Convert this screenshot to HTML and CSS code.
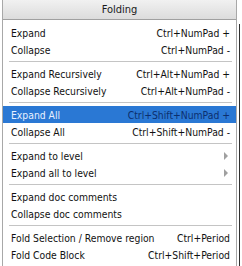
FILE: index.html
```html
<!DOCTYPE html>
<html>
<head>
<meta charset="utf-8">
<link rel="stylesheet" href="styles.css">
</head>
<body>
<div class="page">
  <div class="menu">
    <div class="title">Folding</div>
    <div class="items">
      <div class="item"><span class="label">Expand</span><span class="key">Ctrl+NumPad +</span></div>
      <div class="item"><span class="label">Collapse</span><span class="key">Ctrl+NumPad -</span></div>
      <div class="sep"></div>
      <div class="item"><span class="label">Expand Recursively</span><span class="key">Ctrl+Alt+NumPad +</span></div>
      <div class="item"><span class="label">Collapse Recursively</span><span class="key">Ctrl+Alt+NumPad -</span></div>
      <div class="sep"></div>
      <div class="item active"><span class="label">Expand All</span><span class="key">Ctrl+Shift+NumPad +</span></div>
      <div class="item"><span class="label">Collapse All</span><span class="key">Ctrl+Shift+NumPad -</span></div>
      <div class="sep"></div>
      <div class="item"><span class="label">Expand to level</span><span class="arrow"></span></div>
      <div class="item"><span class="label">Expand all to level</span><span class="arrow"></span></div>
      <div class="sep"></div>
      <div class="item"><span class="label">Expand doc comments</span></div>
      <div class="item"><span class="label">Collapse doc comments</span></div>
      <div class="sep"></div>
      <div class="item"><span class="label">Fold Selection / Remove region</span><span class="key">Ctrl+Period</span></div>
      <div class="item"><span class="label">Fold Code Block</span><span class="key">Ctrl+Shift+Period</span></div>
    </div>
  </div>
  <div class="edge"></div>
</div>
</body>
</html>
```
FILE: styles.css
```css
html, body {
  margin: 0;
  padding: 0;
  background: #ffffff;
}
body {
  font-family: "DejaVu Sans Condensed", "Liberation Sans", Arial, sans-serif;
  font-size: 10.3px;
  color: #000;
  overflow: hidden;
}
.page {
  display: flex;
  width: 242px;
  height: 266px;
  overflow: hidden;
}
.menu {
  margin-left: 2px;
  width: 235px;
  flex: none;
  background: #ffffff;
  border: 1px solid #a8a8a8;
  border-top: none;
  box-sizing: border-box;
  height: 280px;
}
.title {
  height: 19px;
  line-height: 19px;
  font-size: 11px;
  text-align: center;
  background: linear-gradient(#f1f1f1, #dcdcdc);
  border-bottom: 1px solid #a0a0a0;
  color: #1a1a1a;
}
.items {
  padding-top: 4px;
  display: flex;
  flex-direction: column;
}
.item {
  height: 17px;
  display: flex;
  align-items: center;
  justify-content: space-between;
  padding: 0 6px 0 8px;
  color: #111;
  white-space: nowrap;
}
.item.active {
  background: #2a78d4;
}
.item.active .label {
  color: #e8f0ff;
}
.item.active .key {
  color: #0c2f6e;
}
.arrow {
  width: 0;
  height: 0;
  margin-right: 2px;
  border-top: 4px solid transparent;
  border-bottom: 4px solid transparent;
  border-left: 4px solid #a0a0a0;
}
.sep {
  height: 1px;
  margin: 3px 4px 3px 6px;
  background: #c4c4c4;
}
.edge {
  flex: 1;
  margin-left: 2px;
  margin-top: 24px;
  border-left: 1px solid #303030;
}
```
